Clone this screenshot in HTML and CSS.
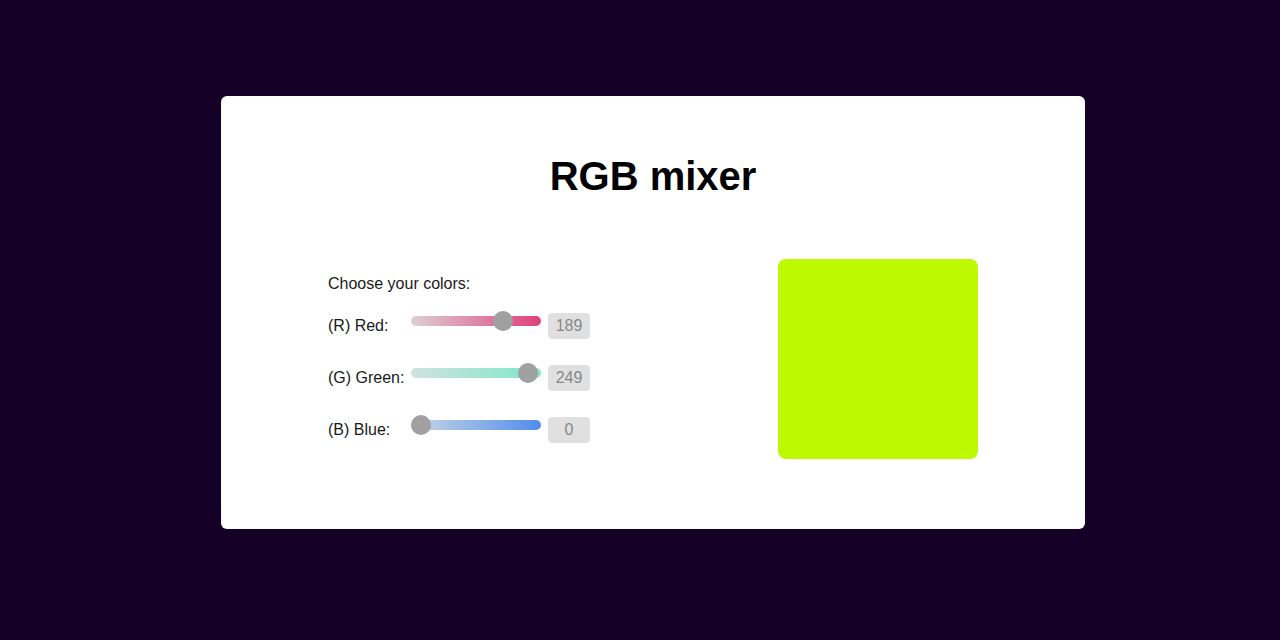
FILE: index.html
```html
<!DOCTYPE html>
<html lang="en">
<head>
  <meta charset="UTF-8" />
  <title>RGB mixer</title>
  <link rel="stylesheet" href="styles.css">
</head>
<body>

<div class="card">
  <h1>RGB mixer</h1>

  <div class="mixer">
    <div class="controls">
      <p class="intro">Choose your colors:</p>

      <div class="row">
        <label for="red">(R) Red:</label>
        <input type="range" id="red" class="slider red" min="0" max="255" value="189" />
        <span class="value" id="redValue">189</span>
      </div>

      <div class="row">
        <label for="green">(G) Green:</label>
        <input type="range" id="green" class="slider green" min="0" max="255" value="249" />
        <span class="value" id="greenValue">249</span>
      </div>

      <div class="row">
        <label for="blue">(B) Blue:</label>
        <input type="range" id="blue" class="slider blue" min="0" max="255" value="0" />
        <span class="value" id="blueValue">0</span>
      </div>
    </div>

    <div class="preview" id="preview"></div>
  </div>
</div>

<script>
  const channels = ["red", "green", "blue"];

  function updateColor() {
    const rgb = channels.map(c => {
      const v = document.getElementById(c).value;
      document.getElementById(c + "Value").textContent = v;
      return v;
    });
    document.getElementById("preview").style.backgroundColor = `rgb(${rgb.join(", ")})`;
  }

  channels.forEach(c => {
    document.getElementById(c).addEventListener("input", updateColor);
  });

  updateColor();
</script>

</body>
</html>
```

FILE: styles.css
```css
body {
  font-family: 'Liberation Sans', Arial, sans-serif;
  background-color: #150028;
  margin: 0;
  padding-top: 96px;
  color: #1a1a1a;
}
.card {
  background: white;
  width: 864px;
  margin-left: 221px;
  border-radius: 6px;
  padding: 57px 0 70px;
}
h1 {
  margin: 0;
  text-align: center;
  font-size: 40px;
  line-height: 46px;
  color: #000;
}
.mixer {
  display: flex;
  justify-content: space-between;
  align-items: center;
  padding: 0 107px;
  margin-top: 60px;
}
.controls {
  display: flex;
  flex-direction: column;
  gap: 26px;
}
.intro {
  margin: 0 0 -6px;
  font-size: 16px;
  line-height: 18px;
}
.row {
  display: flex;
  align-items: center;
  height: 26px;
  font-size: 16px;
}
.row label {
  width: 83px;
}
.slider {
  -webkit-appearance: none;
  appearance: none;
  align-self: flex-start;
  width: 130px;
  height: 10px;
  margin: 3px 7px 0 0;
  border-radius: 5px;
  outline: none;
}
.slider::-webkit-slider-thumb {
  -webkit-appearance: none;
  appearance: none;
  width: 20px;
  height: 20px;
  border-radius: 50%;
  background: #a0a0a0;
  cursor: pointer;
}
.slider.red {
  background: linear-gradient(to right, #dccfd5, #e0407b);
}
.slider.green {
  background: linear-gradient(to right, #d0e2dd, #7de9c8);
}
.slider.blue {
  background: linear-gradient(to right, #cad7e5, #528cea);
}
.value {
  width: 42px;
  height: 26px;
  line-height: 26px;
  text-align: center;
  background: #e0e0e0;
  color: #888;
  border-radius: 4px;
}
.preview {
  width: 200px;
  height: 200px;
  border-radius: 8px;
}
```
